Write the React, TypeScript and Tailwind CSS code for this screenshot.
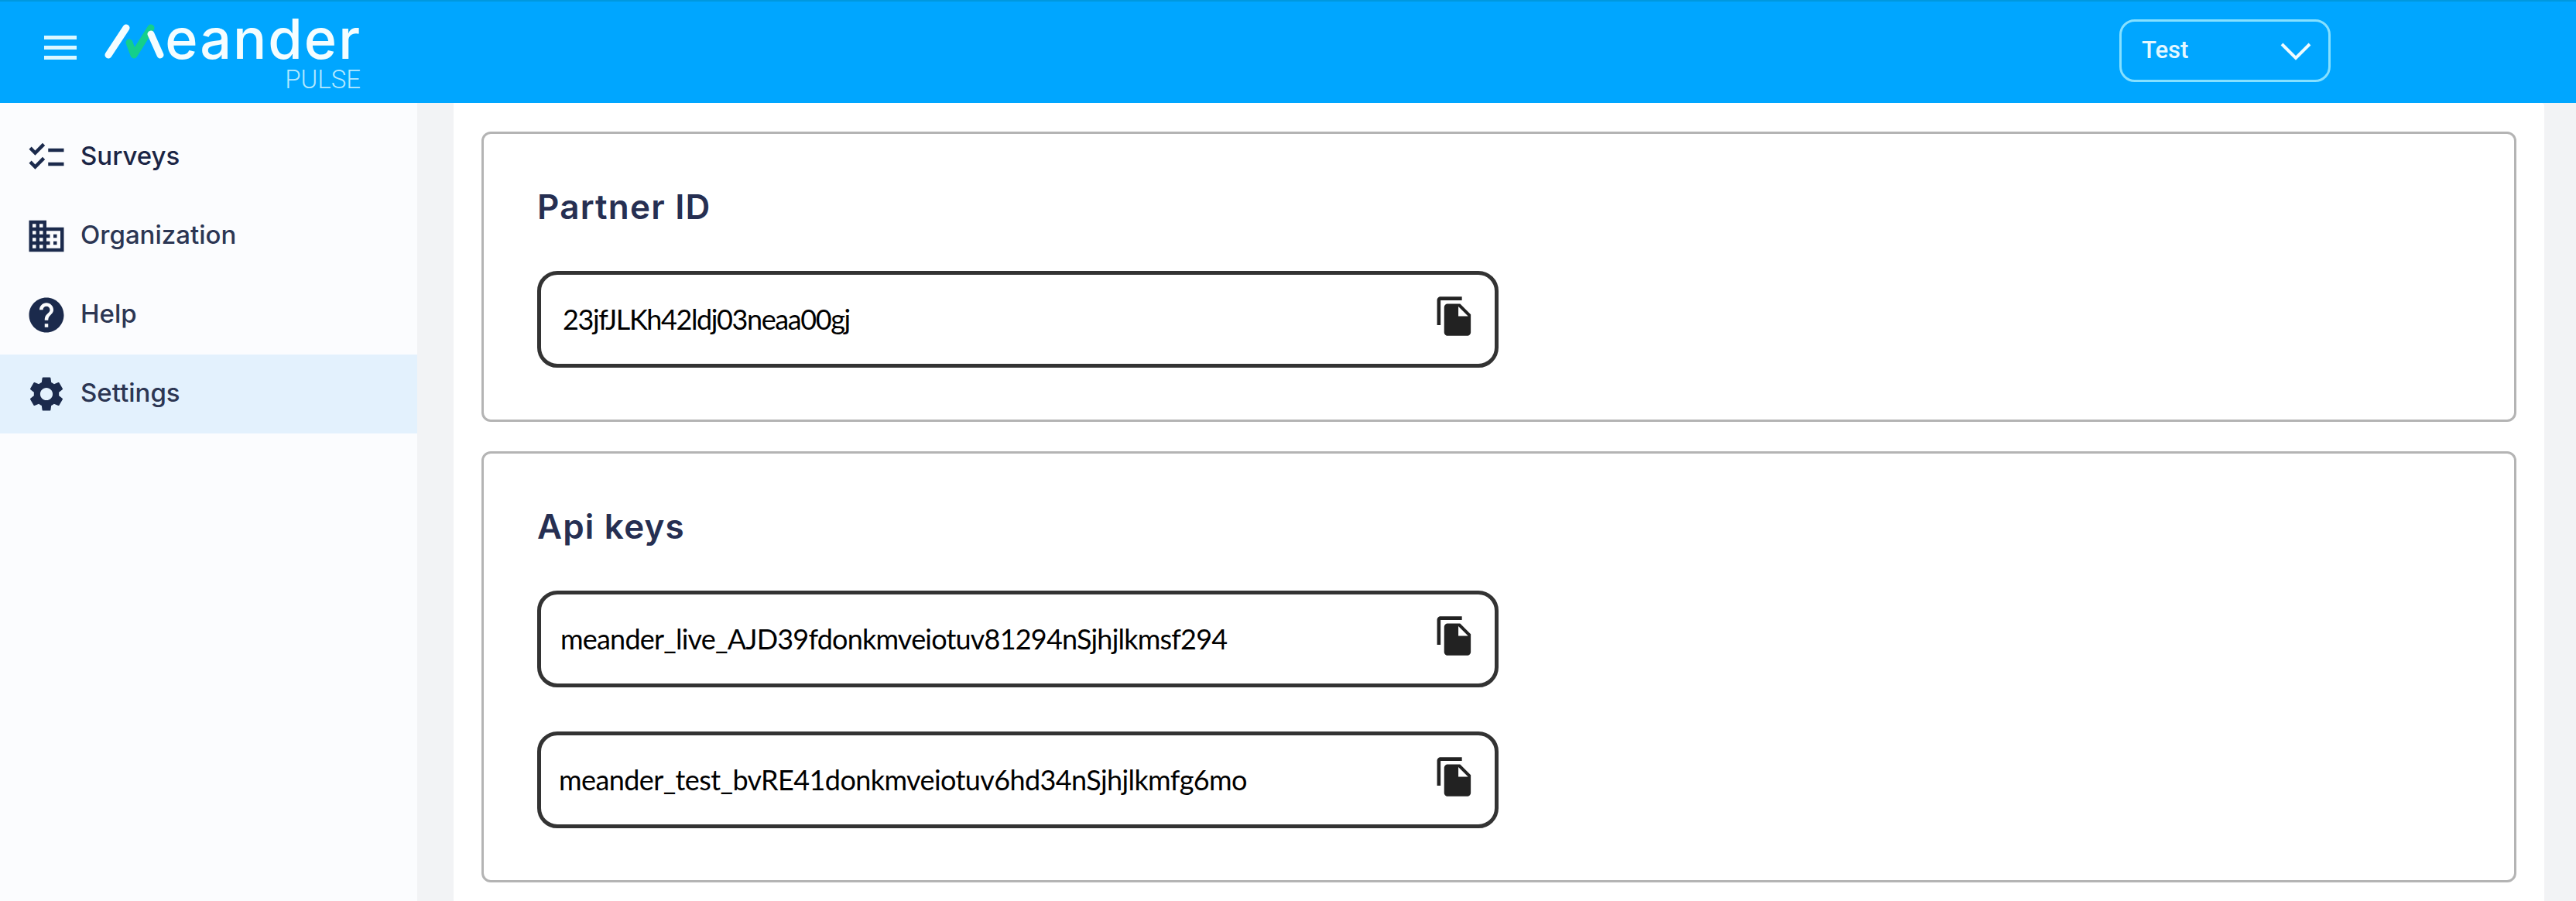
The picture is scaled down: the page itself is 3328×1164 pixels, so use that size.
import { MdChecklist, MdDomain, MdFileCopy, MdHelp, MdSettings } from 'react-icons/md'
import type { IconType } from 'react-icons'

const navItems: { label: string; icon: IconType; active?: boolean; tone: string }[] = [
  { label: 'Surveys', icon: MdChecklist, tone: 'text-[#1b2545]' },
  { label: 'Organization', icon: MdDomain, tone: 'text-[#2c3653]' },
  { label: 'Help', icon: MdHelp, tone: 'text-[#2c3653]' },
  { label: 'Settings', icon: MdSettings, active: true, tone: 'text-[#2c3653]' },
]

function Logo() {
  return (
    <div className="flex flex-col items-end w-[330px] ml-[38px] self-start">
      <div className="flex items-baseline h-[72px] pt-[20px]">
        <svg width="78" height="46" viewBox="0 0 78 46" className="shrink-0 mb-[-2px]">
          <path d="M5 41 L28 6" stroke="#f4fdff" strokeWidth="9" strokeLinecap="round" fill="none" />
          <path d="M32 25 L38 41 L60 6" stroke="#14cf8c" strokeWidth="9" strokeLinecap="round" strokeLinejoin="round" fill="none" />
          <path d="M60 14 L72 41" stroke="#f4fdff" strokeWidth="9" strokeLinecap="round" fill="none" />
        </svg>
        <span className="font-['Inter',sans-serif] text-[72px] leading-[56px] font-medium text-[#f4fdff] tracking-[2px]">eander</span>
      </div>
      <span className="font-['Roboto',sans-serif] text-[33px] leading-[34px] font-light text-[#b4e9ff] mt-[12px] mr-[1px]">PULSE</span>
    </div>
  )
}

function KeyField({ value, text }: { value: string; text: string }) {
  return (
    <div className="w-[1242px] h-[125px] border-[5px] border-[#333333] rounded-[26px] flex items-center justify-between bg-white pr-[24px]">
      <span className={`${text} font-['Lato',sans-serif] text-[36px] text-black leading-none mb-[2px]`}>{value}</span>
      <MdFileCopy size={55} className="text-[#222222] self-start mt-[26px]" />
    </div>
  )
}

function Card({ title, children }: { title: string; children: React.ReactNode }) {
  return (
    <section className="border-[3px] border-[#b4b4b4] rounded-[12px] bg-white pt-[64px] pb-[67px] pl-[69px]">
      <h2 className="font-['Inter',sans-serif] text-[44px] leading-[60px] font-semibold tracking-[1.2px] text-[#262f52] mb-[53px]">{title}</h2>
      <div className="flex flex-col gap-[57px]">{children}</div>
    </section>
  )
}

export default function App() {
  return (
    <div className="h-[1164px] w-[3328px] overflow-hidden flex flex-col bg-[#f2f3f5]">
      <header className="h-[133px] shrink-0 bg-[#00a6ff] border-t-2 border-[#0098de] flex items-start relative">
        <div className="flex flex-col gap-[8px] w-[42px] ml-[57px] mt-[44px]">
          <span className="h-[5px] bg-[#dcf7ff]" />
          <span className="h-[5px] bg-[#dcf7ff]" />
          <span className="h-[5px] bg-[#dcf7ff]" />
        </div>
        <Logo />
        <div className="ml-[2271px] mt-[23px] w-[273px] h-[81px] border-[3px] border-[#86e0ff] rounded-[20px] flex items-center justify-between pl-[26px] pr-[22px]">
          <span className="font-['Roboto',sans-serif] text-[31px] font-medium text-[#e3f7ff]">Test</span>
          <svg width="40" height="24" viewBox="0 0 40 24" fill="none">
            <path d="M2 3 L20 21 L38 3" stroke="#eefbff" strokeWidth="4" />
          </svg>
        </div>
      </header>
      <div className="flex-1 flex min-h-0">
        <aside className="w-[539px] shrink-0 bg-[#fbfcfe] pt-[19px]">
          {navItems.map((item) => (
            <div
              key={item.label}
              className={`h-[102px] flex items-center gap-[17px] pl-[33px] ${item.active ? 'bg-[#e3f1fd]' : ''}`}
            >
              <item.icon size={54} className="text-[#1b2a4c] shrink-0" />
              <span className={`font-['Inter',sans-serif] text-[33px] font-medium mb-[2px] ${item.tone}`}>{item.label}</span>
            </div>
          ))}
        </aside>
        <main className="flex-1 ml-[47px] mr-[41px] bg-white rounded-tr-[4px] px-[36px] pt-[37px] flex flex-col gap-[38px]">
          <Card title="Partner ID">
            <KeyField value="23jfJLKh42ldj03neaa00gj" text="ml-[28px] tracking-[-1.4px]" />
          </Card>
          <Card title="Api keys">
            <KeyField value="meander_live_AJD39fdonkmveiotuv81294nSjhjlkmsf294" text="ml-[25px] tracking-[-0.8px]" />
            <KeyField value="meander_test_bvRE41donkmveiotuv6hd34nSjhjlkmfg6mo" text="ml-[23px] tracking-[-0.6px]" />
          </Card>
        </main>
      </div>
    </div>
  )
}
